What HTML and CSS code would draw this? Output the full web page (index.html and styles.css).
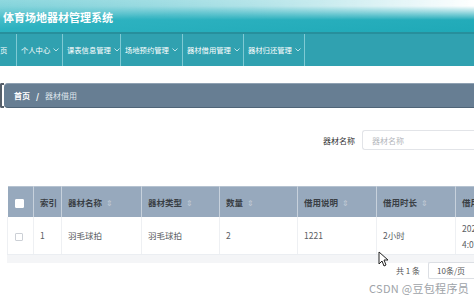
FILE: index.html
```html
<!DOCTYPE html>
<html lang="zh">
<head>
<meta charset="utf-8">
<link rel="stylesheet" href="styles.css">
</head>
<body>
<div class="page">
  <header class="top">
    <div class="title">体育场地器材管理系统</div>
  </header>
  <nav class="nav">
    <div class="nav-item n1">页</div>
    <div class="nav-item n2">个人中心<svg class="arr" width="6" height="4" viewBox="0 0 6 4"><path d="M0.5 0.5 L3 3 L5.5 0.5" fill="none" stroke="#cdecf0" stroke-width="0.9"/></svg></div>
    <div class="nav-item n3">课表信息管理<svg class="arr" width="6" height="4" viewBox="0 0 6 4"><path d="M0.5 0.5 L3 3 L5.5 0.5" fill="none" stroke="#cdecf0" stroke-width="0.9"/></svg></div>
    <div class="nav-item n4">场地预约管理<svg class="arr" width="6" height="4" viewBox="0 0 6 4"><path d="M0.5 0.5 L3 3 L5.5 0.5" fill="none" stroke="#cdecf0" stroke-width="0.9"/></svg></div>
    <div class="nav-item n5">器材借用管理<svg class="arr" width="6" height="4" viewBox="0 0 6 4"><path d="M0.5 0.5 L3 3 L5.5 0.5" fill="none" stroke="#cdecf0" stroke-width="0.9"/></svg></div>
    <div class="nav-item n6">器材归还管理<svg class="arr" width="6" height="4" viewBox="0 0 6 4"><path d="M0.5 0.5 L3 3 L5.5 0.5" fill="none" stroke="#cdecf0" stroke-width="0.9"/></svg></div>
  </nav>
  <div class="crumb-wrap">
    <div class="crumb-edge"></div>
    <div class="crumb"><b>首页</b><span class="sep">/</span><span class="cur">器材借用</span></div>
  </div>
  <div class="search">
    <span class="label">器材名称</span>
    <div class="input">器材名称</div>
  </div>
  <div class="table-wrap">
    <table class="tbl">
      <colgroup>
        <col class="c-chk"><col class="c-idx"><col class="c-w80"><col class="c-w78"><col class="c-w78"><col class="c-w79"><col class="c-w79"><col class="c-w80">
      </colgroup>
      <thead>
        <tr>
          <th><span class="chk head"></span></th>
          <th>索引</th>
          <th>器材名称 <span class="sort">⇕</span></th>
          <th>器材类型 <span class="sort">⇕</span></th>
          <th>数量 <span class="sort">⇕</span></th>
          <th>借用说明 <span class="sort">⇕</span></th>
          <th>借用时长 <span class="sort">⇕</span></th>
          <th>借用时间 <span class="sort">⇕</span></th>
        </tr>
      </thead>
      <tbody>
        <tr>
          <td><span class="chk"></span></td>
          <td>1</td>
          <td>羽毛球拍</td>
          <td>羽毛球拍</td>
          <td>2</td>
          <td>1221</td>
          <td>2小时</td>
          <td class="two">2023-04-05<br>4:07:12</td>
        </tr>
      </tbody>
    </table>
    <div class="scroll"></div>
  </div>
  <div class="pager">
    <span class="total">共 1 条</span>
    <div class="size">10条/页</div>
  </div>
  <div class="mark">CSDN @豆包程序员</div>
  <svg class="cursor" width="10" height="16" viewBox="0 0 10 16"><path d="M1 1 L1 13 L4 10 L6 15 L8 14 L6 9 L10 9 Z" fill="#fff" stroke="#222" stroke-width="1"/></svg>
</div>
</body>
</html>
```
FILE: styles.css
```css
* { box-sizing: border-box; }
html, body { margin: 0; padding: 0; }
body {
  width: 474px; height: 299px; overflow: hidden; background: #fff;
  font-family: "Noto Sans CJK SC", "Noto Sans", sans-serif;
}
.page { position: relative; width: 474px; height: 299px; overflow: hidden; }
.top {
  height: 34px;
  background: linear-gradient(175deg, #74cfd7 0%, #2db2c0 40%, #1fa9b7 100%);
  position: relative;
  display: flex; align-items: center;
  border-bottom: 2px solid #278f9c;
}
.top::after {
  content: ""; position: absolute; left: 0; right: 0; top: 0; height: 20px;
  background: linear-gradient(90deg, rgba(255,255,255,0.2) 0%, rgba(255,255,255,0.6) 50%, rgba(255,255,255,1) 100%);
  -webkit-mask-image: linear-gradient(180deg, #000 30%, transparent 100%);
  mask-image: linear-gradient(180deg, #000 30%, transparent 100%);
}
.title {
  position: relative; z-index: 1;
  color: #fff; font-size: 11px; font-weight: bold; padding-left: 3px; padding-top: 2px;
}
.nav {
  height: 32px; background: #30a1b0; display: flex; align-items: stretch;
}
.nav-item {
  color: #fff; font-size: 7.3px; display: flex; align-items: center;
  padding: 0 0 0 4px; border-right: 1px solid #7fcad4; white-space: nowrap; flex: none;
}
.n1 { width: 17px; padding-left: 0; }
.n2 { width: 46px; }
.n3 { width: 58px; }
.n4 { width: 62px; }
.n5 { width: 61px; }
.n6 { width: 61px; }
.arr { margin-left: 3px; flex: none; }
.crumb-wrap { display: flex; margin-top: 17px; height: 25px; }
.crumb-edge {
  width: 4px; border: 2px solid #555f6a; border-right: none; border-radius: 2px 0 0 2px;
}
.crumb {
  flex: 1; background: #677e93; border-radius: 4px 0 0 4px;
  display: flex; align-items: center; padding-left: 10px; font-size: 8px; color: #fff;
  border-top: 1px solid #8fa1b2; border-bottom: 1px solid #4f6477;
}
.crumb b { font-weight: bold; }
.sep { margin: 0 6px; font-weight: bold; }
.cur { color: #dfe6ec; }
.search {
  display: flex; justify-content: flex-end; align-items: center; margin-top: 22px; height: 20px;
}
.label { font-size: 8px; color: #333; margin-right: 7px; }
.input {
  width: 112px; height: 20px; border: 1px solid #e2e4e8; border-right: none; border-radius: 3px 0 0 3px;
  font-size: 8px; color: #b4b7bc; padding-left: 9px; display: flex; align-items: center;
}
.table-wrap { margin-top: 36px; margin-left: 7px; width: 528px; }
.tbl { border-collapse: collapse; table-layout: fixed; width: 528px; font-size: 8.5px; }
.c-chk { width: 26px; } .c-idx { width: 28px; } .c-w80 { width: 80px; } .c-w78 { width: 78px; } .c-w79 { width: 79px; }
.tbl th {
  background: #97a9bd; height: 30px; text-align: left; font-weight: bold; color: #3a3f45;
  padding: 0 0 0 6px; border-right: 1px solid #c7d1dc; border-top: 1px solid #b5c2d0;
  white-space: nowrap;
}
.tbl td {
  height: 38px; color: #5a5e63; padding: 0 0 0 6px; border-right: 1px solid #eef0f3; border-bottom: 1px solid #ebeef2;
  white-space: nowrap;
}
.tbl td.two { line-height: 16px; padding-top: 2px; }
.tbl th:first-child, .tbl td:first-child { padding-left: 7px; }
.tbl td:first-child { border-left: 1px solid #eef0f3; }
.sort { color: #c3ccd6; font-size: 8px; font-weight: normal; margin-left: 2px; }
.chk { display: inline-block; width: 8px; height: 8px; border: 1px solid #ccd0d6; background: #fff; border-radius: 1px; vertical-align: middle; }
.chk.head { border-color: #fff; width: 9px; height: 9px; }
.scroll { height: 8px; background: #f4f5f7; width: 467px; }
.pager { display: flex; justify-content: flex-end; align-items: center; margin-top: -1px; height: 17px; }
.total { font-size: 8px; color: #555; margin-right: 8px; }
.size {
  width: 46px; height: 17px; border: 1px solid #dcdfe4; border-right: none; border-radius: 2px 0 0 2px;
  font-size: 8px; color: #555; padding-left: 8px; display: flex; align-items: center;
}
.mark {
  position: absolute; right: 5px; bottom: 3px; font-size: 11px; color: #9ea3a8;
  letter-spacing: 0.3px;
}
.cursor { position: absolute; left: 378px; top: 251px; }
```
